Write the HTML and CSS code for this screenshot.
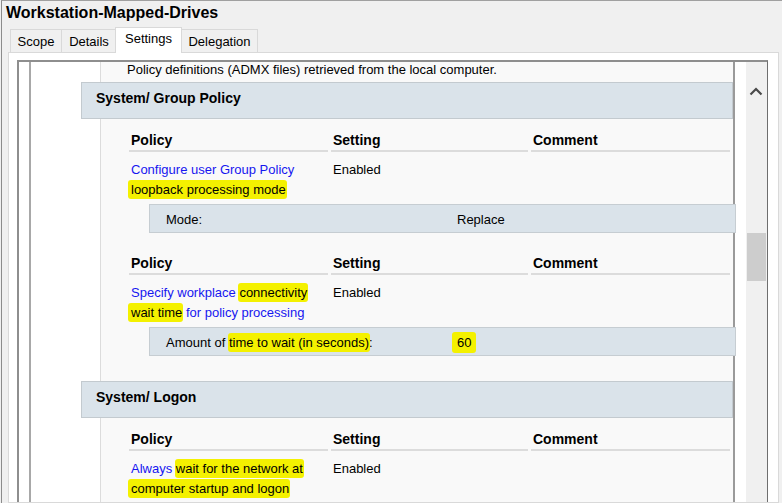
FILE: index.html
```html
<!DOCTYPE html>
<html>
<head>
<meta charset="utf-8">
<link rel="stylesheet" href="styles.css">
</head>
<body>
<div class="window">
  <div class="title">Workstation-Mapped-Drives</div>
  <div class="tabs">
    <div class="tab tab-scope">Scope</div>
    <div class="tab tab-details">Details</div>
    <div class="tab tab-settings active">Settings</div>
    <div class="tab tab-delegation">Delegation</div>
  </div>
  <div class="tabpage">
    <div class="browser">
      <div class="page">
        <div class="lvl1">
          <div class="lvl2">
            <p class="intro">Policy definitions (ADMX files) retrieved from the local computer.</p>

            <div class="sec-head">System/ Group Policy</div>
            <div class="sec-body">
              <div class="ptable">
                <div class="th">Policy</div>
                <div class="th">Setting</div>
                <div class="th">Comment</div>
                <div class="td"><span class="link">Configure user Group Policy<br><span class="hl hl-lead">loopback processing mode</span></span></div>
                <div class="td">Enabled</div>
                <div class="td"></div>
              </div>
              <div class="vbox">
                <div>Mode:</div>
                <div>Replace</div>
              </div>

              <div class="ptable gap">
                <div class="th">Policy</div>
                <div class="th">Setting</div>
                <div class="th">Comment</div>
                <div class="td"><span class="link">Specify workplace <span class="hl">connectivity</span><br><span class="hl hl-lead">wait time</span> for policy processing</span></div>
                <div class="td">Enabled</div>
                <div class="td"></div>
              </div>
              <div class="vbox">
                <div>Amount of <span class="hl">time to wait (in seconds)</span>:</div>
                <div><span class="hl hl-num">60</span></div>
              </div>
            </div>

            <div class="sec-head sec-next">System/ Logon</div>
            <div class="sec-body">
              <div class="ptable">
                <div class="th">Policy</div>
                <div class="th">Setting</div>
                <div class="th">Comment</div>
                <div class="td"><span class="link">Always <span class="hl">wait for the network at</span><br><span class="hl hl-lead">computer startup and logon</span></span></div>
                <div class="td">Enabled</div>
                <div class="td"></div>
              </div>
            </div>
          </div>
        </div>
      </div>
      <div class="scrollbar">
        <svg class="scroll-up" width="14" height="10" viewBox="0 0 14 10">
          <polyline points="1.5,8.5 7,3 12.5,8.5" fill="none" stroke="#4a4a4a" stroke-width="2.2"/>
        </svg>
        <div class="thumb"></div>
      </div>
    </div>
  </div>
</div>
</body>
</html>
```
FILE: styles.css
```css
* { box-sizing: border-box; }
html, body { margin: 0; padding: 0; }
body {
  width: 782px;
  height: 503px;
  overflow: hidden;
  background: #f0f0f0;
  font-family: "Liberation Sans", Arial, sans-serif;
  color: #000;
}
.window {
  height: 503px;
  margin-left: 1px;
  border-left: 1px solid #8c8c8c;
  border-top: 1px solid #a0a0a0;
  display: flex;
  flex-direction: column;
  overflow: hidden;
}
.title {
  padding: 2px 0 0 4px;
  font-size: 16px;
  line-height: 20px;
  font-weight: bold;
  color: #000;
}
.tabs {
  display: flex;
  align-items: flex-end;
  height: 25px;
  margin: 4px 0 0 8px;
}
.tab {
  height: 23px;
  border: 1px solid #d9d9d9;
  border-bottom: none;
  background: #f0f0f0;
  font-size: 13px;
  line-height: 16px;
  padding-top: 4px;
  text-align: center;
  margin-left: -1px;
  color: #000;
}
.tab-scope { width: 52px; margin-left: 0; }
.tab-details { width: 56px; }
.tab-settings { width: 67px; }
.tab-delegation { width: 77px; }
.tab.active {
  height: 26px;
  margin-left: -2px;
  margin-bottom: -1px;
  padding-top: 3px;
  background: #fff;
  position: relative;
  z-index: 1;
}
.tabpage {
  flex: 1;
  min-height: 0;
  margin: 0 3px 0 6px;
  border: 1px solid #d9d9d9;
  background: #fff;
  padding: 7px 10px 0 8px;
  display: flex;
}
.browser {
  flex: 1;
  display: flex;
  border-top: 2px solid #8e8e8e;
  border-left: 2px solid #8e8e8e;
  border-right: 1px solid #6e6e6e;
  overflow: hidden;
}
.page {
  flex: 1;
  background: #fff;
  overflow: hidden;
}
.lvl1 {
  margin: 0 11px 0 10px;
  border-left: 2px solid #a8a8a8;
  border-right: 2px solid #9a9a9a;
  padding-left: 69px;
  background: #fff;
}
.lvl2 {
  border-left: 1px solid #dcdcdc;
  background: #f9f9f9;
  padding-bottom: 60px;
}
.intro {
  margin: 0;
  padding-left: 26px;
  font-size: 13px;
  line-height: 16px;
  white-space: nowrap;
}
.sec-head {
  margin: 4px 0 0 -20px;
  border: 1px solid #c3cacf;
  background: #dae3ea;
  padding: 7px 14px 12px;
  font-size: 14px;
  font-weight: bold;
  line-height: 16px;
}
.sec-next { margin-top: 25px; }
.sec-body {
  padding: 0 2px 0 28px;
}
.ptable {
  display: grid;
  grid-template-columns: 199px 197px 199px;
  column-gap: 3px;
  margin-top: 13px;
}
.ptable.gap { margin-top: 22px; }
.th {
  font-size: 14px;
  font-weight: bold;
  line-height: 16px;
  padding: 0 2px 2px;
  border-bottom: 2px solid #dcdcdc;
}
.td {
  font-size: 13px;
  line-height: 20px;
  padding: 8px 2px 0;
  white-space: nowrap;
}
.link { color: #1616f0; }
.hl {
  background: #f4f100;
  color: #000;
  padding: 2px 1px;
  margin: 0 -1px;
  border-radius: 3px;
}
.hl-lead { padding-left: 3px; margin-left: -3px; }
.hl-num { padding: 3px 5px; margin: 0 -5px; }
.vbox {
  margin: 4px -5px 0 20px;
  border: 1px solid #c6cdd2;
  background: #dae3ea;
  padding: 7px 0 4px 16px;
  display: grid;
  grid-template-columns: 291px auto;
  font-size: 13px;
  line-height: 16px;
  white-space: nowrap;
}
.scrollbar {
  width: 21px;
  background: #f0f0f0;
  display: flex;
  flex-direction: column;
}
.scroll-up {
  display: block;
  margin: 24px 0 0 3px;
}
.thumb {
  margin: 137px 1px 0;
  height: 48px;
  background: #cdcdcd;
}
```
